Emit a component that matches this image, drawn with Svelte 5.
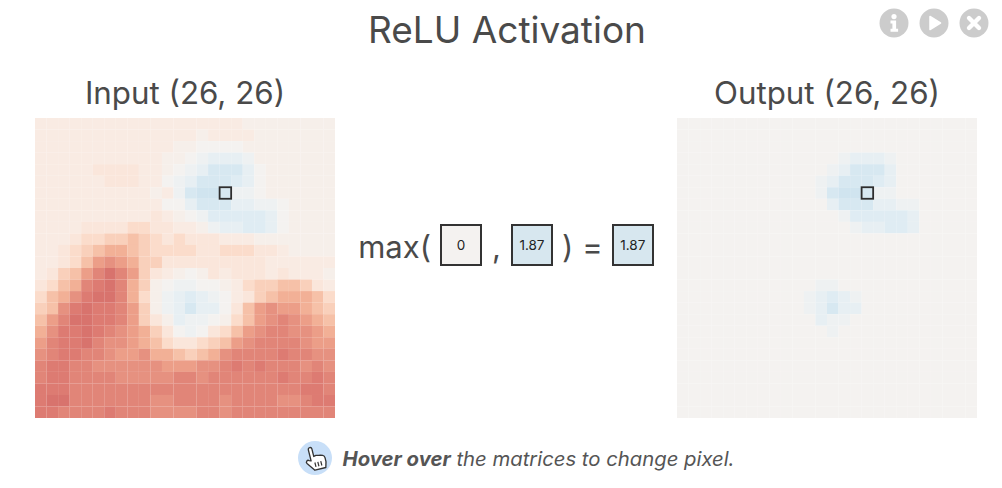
<script>
  // one char per cell, '.' is zero, a-e go up through blue, ',' 0-9 x go down through red
  const palette = {
    '.': '#f4f2f0', ',': '#f6efea', '0': '#f9ebe3', '1': '#fae6db', '2': '#fbdccb', '3': '#f9d0bb',
    '4': '#f6c1a8', '5': '#f2b096', '6': '#ec9e88', '7': '#e69180', '8': '#e18578', '9': '#dd7b72',
    x: '#d8736d', a: '#eef1f2', b: '#e7eff3', c: '#dfecf3', d: '#d7e8f1', e: '#d0e4ef'
  };

  const rows = [
    '000000000000000000,,,,,,,,',
    '00000000000000,0000,,,,,,,',
    '000000000000,,....,,,,,,,,',
    '00000000000,,.abbba,,,,,,,',
    '00000111100,.abdddb.,,,,,,',
    '00000011100.abdddcb.,,,,,,',
    '0000000000,0adeedaa.,,,,,,',
    '00000000000..bdddbbaa.,,,,',
    '000000000010,.acccccb.,,,,',
    '00001111221100,abbccb.,,,,',
    '00012233432121' + '11000,,,,,,,',
    '0012345543222211222110,,,,',
    '00124676533111111111000000',
    '013468x86310,.,10111010' + '00,',
    '124589x853,.aa..,023344310',
    '24579xx852,abcba.013455542',
    '3479x99863,abdbb.146766543'.slice(0, 26),
    '468xx998631,baa.,246787654',
    '5799x9876531.a.12467887765',
    '6899x877654211234678888766',
    '78998876675543457888898877',
    '89988777777666778989888787',
    '89988887777788788888898898',
    '99988888888888888888888998',
    '9xx88888887788887888877899',
    '99888898887777887888888888'
  ];

  const size = 300 / 26;
  const selected = { col: 16, row: 6 };

  const cells = (keep) =>
    rows.flatMap((line, row) =>
      [...line].map((ch, col) => ({ x: col * size, y: row * size, fill: palette[keep(ch)] }))
    );

  const input = cells((ch) => ch);
  const output = cells((ch) => ('abcde'.includes(ch) ? ch : '.'));
  const matrices = [
    { label: 'Input (26, 26)', cells: input },
    { label: 'Output (26, 26)', cells: output }
  ];
</script>

{#snippet matrix(m)}
  <div class="panel">
    <div class="label">{m.label}</div>
    <svg class="grid" viewBox="0 0 300 300" width="300" height="300">
      {#each m.cells as c}
        <rect x={c.x} y={c.y} width={size + 0.06} height={size + 0.06} fill={c.fill} />
      {/each}
      <rect class="pick" x={selected.col * size} y={selected.row * size} width={size} height={size} />
    </svg>
  </div>
{/snippet}

<div class="page">
  <h1>ReLU Activation</h1>

  <div class="controls">
    <svg viewBox="0 0 30 30" width="30" height="30">
      <circle cx="15" cy="15" r="14.5" fill="#ccc" />
      <circle cx="15" cy="8.6" r="2.6" fill="#fff" />
      <path d="M11.5 12.6h5.6v8.2h2v2.9h-7.6v-2.9h1.9v-5.3h-1.9z" fill="#fff" />
    </svg>
    <svg viewBox="0 0 30 30" width="30" height="30">
      <circle cx="15" cy="15" r="14.5" fill="#ccc" />
      <path d="M11 8.5 21.5 15 11 21.5z" fill="#fff" stroke="#fff" stroke-width="1.5" stroke-linejoin="round" />
    </svg>
    <svg viewBox="0 0 30 30" width="30" height="30">
      <circle cx="15" cy="15" r="14.5" fill="#ccc" />
      <path d="M10 10 20 20M20 10 10 20" stroke="#fff" stroke-width="4.4" stroke-linecap="round" />
    </svg>
  </div>

  <div class="row">
    {@render matrix(matrices[0])}

    <div class="formula">
      <span>max(</span>
      <div class="box zero">0</div>
      <span class="comma">,</span>
      <div class="box">1.87</div>
      <span>)</span>
      <span>=</span>
      <div class="box">1.87</div>
    </div>

    {@render matrix(matrices[1])}
  </div>

  <div class="hint">
    <div class="hand">
      <svg viewBox="0 0 24 24" width="29" height="29">
        <g transform="rotate(-14 12 12)">
          <path
            d="M8.800 13.200V3.800a1.500 1.500 0 0 1 3 0v6.400l1.900-.4 2 .4 1.800.4 1.700.6a2.400 2.400 0 0 1 1.400 2.200v3.400l-1.300 4.700H10l-5-7a1.500 1.500 0 0 1 2.300-1.900z"
            fill="#fff"
            stroke="#333"
            stroke-width="1.100"
            stroke-linejoin="round"
          />
          <path d="M11.500 15.300v3.800M14 15.300v3.800M16.500 15.300v3.800" stroke="#333" stroke-width="1" fill="none" />
        </g>
      </svg>
    </div>
    <span class="hint-text"><b>Hover over</b> the matrices to change pixel.</span>
  </div>
</div>

<style>
  :global(body) {
    margin: 0;
    background: #fff;
  }

  .page {
    position: relative;
    width: 1002px;
    height: 488px;
    font-family: Inter, "Noto Sans", sans-serif;
    color: #4a4a4a;
  }

  h1 {
    margin: 0;
    padding-top: 7px;
    padding-left: 12px;
    text-align: center;
    font-size: 37px;
    font-weight: 400;
    line-height: 46px;
  }

  .controls {
    position: absolute;
    top: 8px;
    right: 13px;
    display: flex;
    gap: 10px;
  }

  .row {
    display: flex;
    justify-content: space-between;
    align-items: flex-end;
    margin-top: 20px;
    padding: 0 25px 0 35px;
  }

  .panel {
    width: 300px;
  }

  .label {
    text-align: center;
    font-size: 31.3px;
    line-height: 40px;
    margin-bottom: 5px;
  }

  .grid {
    display: block;
  }

  .pick {
    fill: none;
    stroke: #2e2e2e;
    stroke-width: 1.8;
  }

  .formula {
    display: flex;
    align-items: center;
    height: 41px;
    margin-bottom: 153px;
    font-size: 31px;
    gap: 9px;
  }

  .formula span {
    padding-top: 4px;
  }

  .box {
    box-sizing: border-box;
    width: 42px;
    height: 42px;
    display: flex;
    align-items: center;
    justify-content: center;
    border: 2px solid #333;
    background: #d7e7ef;
    color: #222;
    font-size: 13.5px;
  }

  .zero {
    background: #f4f2f0;
  }

  .comma {
    margin: 0 1px;
  }

  .hint {
    display: flex;
    align-items: center;
    justify-content: center;
    gap: 11px;
    margin-top: 23px;
    padding-left: 30px;
    font-size: 20.3px;
    font-style: italic;
    color: #555;
  }

  .hand {
    width: 34px;
    height: 34px;
    border-radius: 50%;
    background: #c8dff8;
    display: flex;
    align-items: center;
    justify-content: center;
  }
</style>
